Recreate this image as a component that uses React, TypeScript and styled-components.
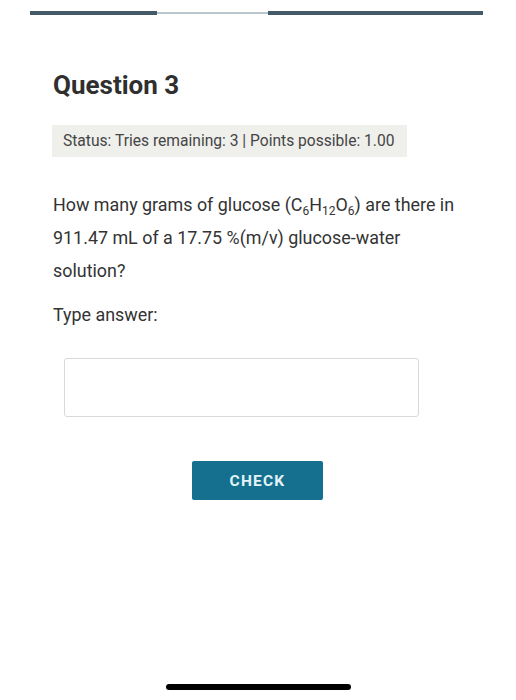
import React from 'react'
import styled, { createGlobalStyle } from 'styled-components'

const GlobalStyle = createGlobalStyle`
  html, body {
    margin: 0;
    padding: 0;
    background: #ffffff;
  }
  body {
    font-family: Roboto, "Liberation Sans", Arial, sans-serif;
    color: #333333;
  }
`

const Screen = styled.div`
  width: 516px;
  height: 700px;
  display: flex;
  flex-direction: column;
  box-sizing: border-box;
  padding-top: 11px;
`

const Progress = styled.div`
  margin: 0 33px 0 30px;
  height: 4px;
  display: flex;
  align-items: center;
`

const Segment = styled.div<{ $w: number; $done?: boolean }>`
  width: ${(p) => p.$w}px;
  height: ${(p) => (p.$done ? 4 : 2)}px;
  background: ${(p) => (p.$done ? '#435a68' : '#b9c6cc')};
`

const Content = styled.main`
  padding: 55px 0 0 53px;
  display: flex;
  flex-direction: column;
`

const Heading = styled.h2`
  margin: 0;
  font-size: 26px;
  font-weight: 700;
  color: #2f2f2f;
  line-height: 30px;
`

const Status = styled.div`
  margin-top: 25px;
  margin-left: -1px;
  width: 355px;
  height: 32px;
  box-sizing: border-box;
  padding-left: 11px;
  display: flex;
  align-items: center;
  background: #efefec;
  font-size: 15.6px;
  color: #454545;
  white-space: nowrap;
`

const Question = styled.p`
  margin: 31px 0 0;
  font-size: 17.9px;
  line-height: 33px;
  color: #333333;
  width: 405px;

  sub {
    font-size: 12px;
    line-height: 0;
    vertical-align: -4px;
  }
`

const Label = styled.div`
  margin-top: 16px;
  font-size: 17.9px;
  line-height: 24px;
  color: #333333;
`

const AnswerInput = styled.input`
  margin: 31px 0 0 11px;
  width: 355px;
  height: 59px;
  box-sizing: border-box;
  border: 1px solid #d9d9d9;
  border-radius: 3px;
  background: #ffffff;
  outline: none;
  font: inherit;
  padding: 0 12px;
`

const CheckButton = styled.button`
  margin: 44px 0 0 139px;
  width: 131px;
  height: 39px;
  border: none;
  border-radius: 2px;
  background: #15708f;
  color: #e4f3f8;
  font-family: Roboto, "Liberation Sans", Arial, sans-serif;
  font-size: 15.5px;
  font-weight: 700;
  letter-spacing: 1.2px;
  cursor: pointer;
`

const HomeIndicator = styled.div`
  margin: auto auto 10px auto;
  width: 185px;
  height: 6px;
  border-radius: 3px;
  background: #000000;
`

export default function App() {
  return (
    <>
      <GlobalStyle />
      <Screen>
        <Progress>
          <Segment $w={127} $done />
          <Segment $w={111} />
          <Segment $w={215} $done />
        </Progress>
        <Content>
          <Heading>Question 3</Heading>
          <Status>Status: Tries remaining: 3 | Points possible: 1.00</Status>
          <Question>
            How many grams of glucose (C<sub>6</sub>H<sub>12</sub>O<sub>6</sub>) are there in
            911.47 mL of a 17.75 %(m/v) glucose-water solution?
          </Question>
          <Label>Type answer:</Label>
          <AnswerInput type="text" aria-label="Type answer" />
          <CheckButton>CHECK</CheckButton>
        </Content>
        <HomeIndicator />
      </Screen>
    </>
  )
}
